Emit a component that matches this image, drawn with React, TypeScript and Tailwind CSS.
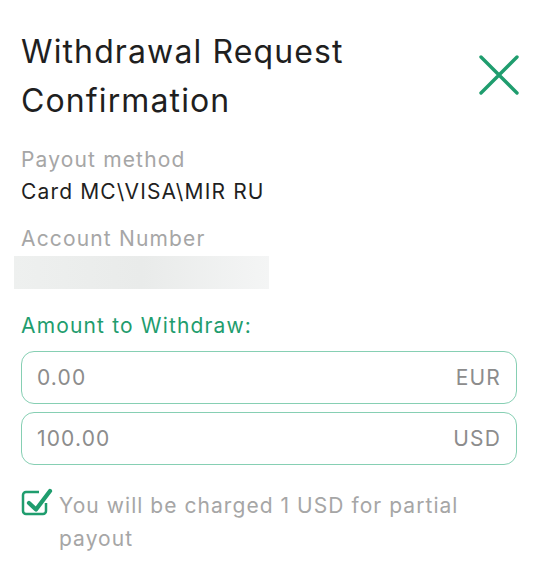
function CheckIcon() {
  return (
    <svg viewBox="0 0 32 28" className="h-[28px] w-[32px] shrink-0 -mt-[1px]">
      <path
        d="M18 4 H5 a3 3 0 0 0 -3 3 V23 a3 3 0 0 0 3 3 H22 a3 3 0 0 0 3 -3 V15"
        fill="none"
        stroke="#1f9d6e"
        strokeWidth="2.5"
      />
      <path
        d="M8 15 L15 21.5 L29 3"
        fill="none"
        stroke="#1f9d6e"
        strokeWidth="4.2"
        strokeLinecap="round"
        strokeLinejoin="round"
      />
    </svg>
  )
}

function AmountInput({ value, currency }: { value: string; currency: string }) {
  return (
    <div className="flex h-[53px] items-center justify-between rounded-[13px] border-[1.5px] border-[#86cfb3] px-[15px] text-[21px] tracking-[0.055em] text-[#8c8c8c]">
      <span>{value}</span>
      <span>{currency}</span>
    </div>
  )
}

export default function App() {
  return (
    <div className="min-h-[579px] w-[538px] bg-white px-[21px] pt-[27px] font-['Inter',sans-serif]">
      <div className="flex items-start justify-between">
        <h1 className="text-[32px] leading-[49px] tracking-[0.035em] text-[#1f1f1f]">
          Withdrawal Request
          <br />
          Confirmation
        </h1>
        <svg viewBox="0 0 40 40" className="-mr-[2px] mt-[28px] h-[40px] w-[40px]">
          <path d="M2 2 L38 38 M38 2 L2 38" stroke="#1f9d6e" strokeWidth="3.4" strokeLinecap="round" />
        </svg>
      </div>

      <section className="mt-[19px] flex flex-col text-[21px] leading-[32px] tracking-[0.055em]">
        <span className="text-[#a6a6a6]">Payout method</span>
        <span className="text-[#1f1f1f]">Card MC\VISA\MIR RU</span>
        <span className="mt-[15px] text-[#a6a6a6]">Account Number</span>
        <div className="-ml-[7px] mt-[1px] h-[33px] w-[255px] bg-gradient-to-r from-[#eef0ef] via-[#e9ebea] to-[#f4f5f5]" />
      </section>

      <h2 className="mt-[21px] text-[21px] leading-[32px] tracking-[0.055em] text-[#1f9d6e]">
        Amount to Withdraw:
      </h2>
      <div className="mt-[9px] flex flex-col gap-[8px]">
        <AmountInput value="0.00" currency="EUR" />
        <AmountInput value="100.00" currency="USD" />
      </div>

      <div className="mt-[24px] flex gap-[6px]">
        <CheckIcon />
        <p className="text-[21px] leading-[33px] tracking-[0.05em] text-[#a6a6a6]">
          You will be charged 1 USD for partial payout
        </p>
      </div>
    </div>
  )
}
